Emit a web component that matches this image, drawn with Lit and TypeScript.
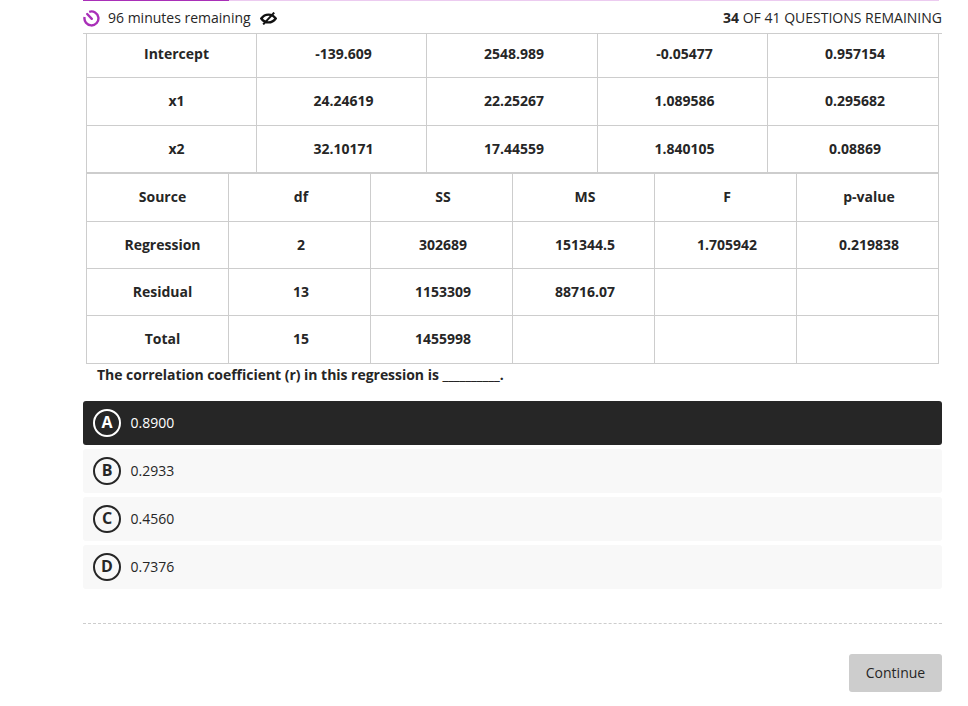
import {LitElement, html, css} from 'lit';
import {customElement, state} from 'lit/decorators.js';

const coefRows = [
  ['Intercept', '-139.609', '2548.989', '-0.05477', '0.957154'],
  ['x1', '24.24619', '22.25267', '1.089586', '0.295682'],
  ['x2', '32.10171', '17.44559', '1.840105', '0.08869'],
];

const anovaRows = [
  ['Source', 'df', 'SS', 'MS', 'F', 'p-value'],
  ['Regression', '2', '302689', '151344.5', '1.705942', '0.219838'],
  ['Residual', '13', '1153309', '88716.07', '', ''],
  ['Total', '15', '1455998', '', '', ''],
];

const answers = [
  ['A', '0.8900'],
  ['B', '0.2933'],
  ['C', '0.4560'],
  ['D', '0.7376'],
];

@customElement('app-root')
export class AppRoot extends LitElement {
  @state()
  selected = 'A';

  static override styles = css`
    :host {
      display: block;
      height: 706px;
      overflow: hidden;
      background: #fff;
      padding: 0 26px 0 83px;
      box-sizing: border-box;
      font-family: "Open Sans", "Liberation Sans", sans-serif;
      font-size: 14px;
      color: #262626;
    }

    .progress {
      display: flex;
      height: 1px;
      margin-right: 3px;
      background: #eccbf0;
    }
    .progress-fill {
      width: 146px;
      background: #a92fb8;
    }

    .top {
      display: flex;
      align-items: center;
      justify-content: space-between;
      height: 33px;
      padding-top: 1px;
      box-sizing: border-box;
      border-bottom: 1px solid #cdcdcd;
    }
    .timer {
      display: flex;
      align-items: center;
    }
    .timer svg {
      display: block;
      position: relative;
      top: 1px;
    }
    .timer span {
      margin: 0 9px 0 8px;
    }
    .count {
      text-transform: uppercase;
    }
    .count b {
      font-weight: 700;
    }

    .tables {
      padding: 0 3px;
    }
    table {
      width: 100%;
      table-layout: fixed;
      border-collapse: collapse;
    }
    td {
      border: 1px solid #cdcdcd;
      border-top: 0;
      padding: 0 0 2px 3px;
      text-align: center;
      font-weight: 700;
      font-size: 14px;
    }
    .coef td {
      padding-left: 4px;
    }
    td:first-child,
    .coef td:first-child {
      padding-left: 10px;
    }
    .coef col:nth-child(3),
    .coef col:nth-child(5) {
      width: 171px;
    }
    .coef col {
      width: 170px;
    }
    .coef td { height: 45px; }
    .coef tr:first-of-type td { height: 39px; padding-bottom: 4px; }
    .coef tr:last-of-type td { height: 45px; padding-bottom: 1px; }
    .anova { border-top: 1px solid #cdcdcd; }
    .anova td { height: 44px; }
    .anova tr:first-of-type td { height: 45px; }
    .anova tr:last-of-type td { height: 45px; }

    .question {
      margin: 0;
      padding: 0 0 0 14px;
      height: 37px;
      line-height: 21px;
      font-weight: 700;
      letter-spacing: -0.03px;
    }

    .answers {
      display: flex;
      flex-direction: column;
      gap: 4px;
    }
    .answer {
      display: flex;
      align-items: center;
      height: 44px;
      padding-left: 10px;
      border-radius: 3px;
      background: #f8f8f8;
      box-sizing: border-box;
    }
    .answer.on {
      background: #262626;
      color: #fff;
    }
    .letter {
      display: flex;
      align-items: center;
      justify-content: center;
      width: 28px;
      height: 28px;
      margin-right: 9.5px;
      padding-bottom: 2px;
      box-sizing: border-box;
      border: 2px solid #262626;
      border-radius: 50%;
      font-weight: 700;
      font-size: 16px;
    }
    .answer.on .letter {
      border-color: #fff;
    }
    .value {
      margin-bottom: 2px;
    }

    .rule {
      margin-top: 34px;
      border-top: 1px dashed #cdcdcd;
    }
    .actions {
      display: flex;
      justify-content: flex-end;
      margin-top: 30px;
    }
    button {
      width: 93px;
      height: 38px;
      padding: 0 0 2px;
      border: 0;
      border-radius: 3px;
      background: #cdcdcd;
      color: #262626;
      font: inherit;
    }
  `;

  override render() {
    return html`
      <div class="progress"><div class="progress-fill"></div></div>
      <div class="top">
        <div class="timer">
          <svg width="17" height="17" viewBox="0 0 17 17" fill="none" stroke="#a92fb8" stroke-width="2.4">
            <path d="M6.2 1.8 A7 7 0 1 1 1.6 7"/>
            <path d="M4.2 4 L8.8 8.8" stroke-linecap="round"/>
          </svg>
          <span>96 minutes remaining</span>
          <svg width="17" height="13" viewBox="0 0 17 13" fill="none" stroke="#111" stroke-width="2.4">
            <path d="M1.3 6.5 C3.5 3.4 6 2.6 8.5 2.6 C11 2.6 13.5 3.4 15.7 6.5 C13.5 9.6 11 10.4 8.5 10.4 C6 10.4 3.5 9.6 1.3 6.5 Z"/>
            <path d="M3.2 12.4 L14.2 0.6" stroke-width="2"/>
          </svg>
        </div>
        <div class="count"><b>34</b> of 41 questions remaining</div>
      </div>
      <div class="tables">
        <table class="coef">
          <colgroup><col><col><col><col><col></colgroup>
          ${coefRows.map((r) => html`<tr>${r.map((c) => html`<td>${c}</td>`)}</tr>`)}
        </table>
        <table class="anova">
          ${anovaRows.map((r) => html`<tr>${r.map((c) => html`<td>${c}</td>`)}</tr>`)}
        </table>
      </div>
      <p class="question">The correlation coefficient (r) in this regression is __________.</p>
      <div class="answers">
        ${answers.map(
          ([letter, value]) => html`
            <div class="answer ${letter === this.selected ? 'on' : ''}" @click=${() => (this.selected = letter)}>
              <span class="letter">${letter}</span>
              <span class="value">${value}</span>
            </div>
          `
        )}
      </div>
      <div class="rule"></div>
      <div class="actions"><button>Continue</button></div>
    `;
  }
}

declare global {
  interface HTMLElementTagNameMap {
    'app-root': AppRoot;
  }
}
